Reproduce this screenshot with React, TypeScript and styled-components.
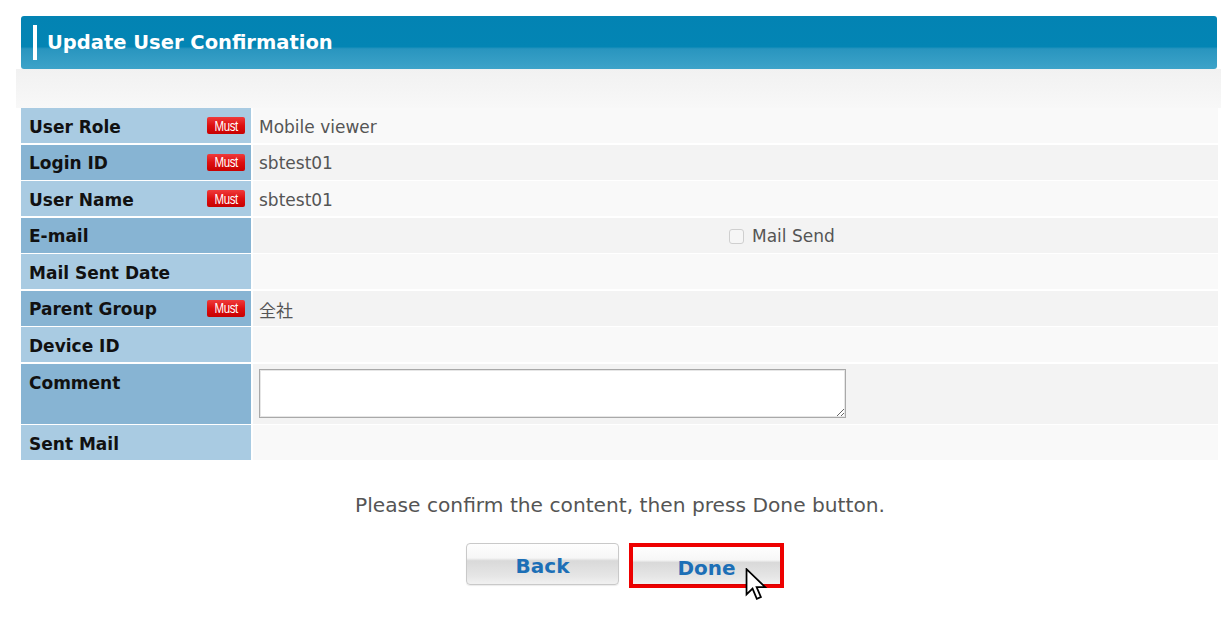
import React from "react";
import styled, { createGlobalStyle } from "styled-components";

const GlobalStyle = createGlobalStyle`
  html, body {
    margin: 0;
    padding: 0;
    background: #fff;
  }
  body {
    font-family: "DejaVu Sans", Verdana, sans-serif;
  }
`;

const Page = styled.div`
  width: 1227px;
  height: 635px;
  padding-top: 16px;
  box-sizing: border-box;
`;

const Panel = styled.div`
  margin-left: 16px;
  width: 1205px;
`;

const TitleBar = styled.div`
  margin: 0 4px 0 5px;
  height: 53px;
  border-radius: 3px;
  background: linear-gradient(
    to bottom,
    #0383b3 0%,
    #0385b4 58%,
    #2995bf 62%,
    #3da3c9 100%
  );
  display: flex;
  align-items: center;
  padding-left: 12px;
  box-shadow: 0 1px 1px rgba(0, 0, 0, 0.06);
`;

const Accent = styled.span`
  width: 4px;
  height: 35px;
  background: #fff;
  margin-right: 10px;
  margin-top: -1px;
`;

const Title = styled.h1`
  margin: 0;
  color: #fff;
  font-size: 19.5px;
  font-weight: bold;
`;

const Spacer = styled.div`
  height: 39px;
  background: linear-gradient(to bottom, #f1f1f1, #f8f8f8);
`;

const Table = styled.div`
  display: flex;
  flex-direction: column;
  gap: 1.5px;
  margin: 0 3px 0 5px;
  background: #fff;
`;

const Row = styled.div<{ $tall?: boolean }>`
  display: grid;
  grid-template-columns: 230px 1fr;
  column-gap: 2px;
  height: ${(p) => (p.$tall ? "60px" : "35px")};
`;

const Label = styled.div<{ $dark: boolean; $top?: boolean }>`
  background: ${(p) => (p.$dark ? "#87b4d3" : "#a9cbe2")};
  display: flex;
  align-items: ${(p) => (p.$top ? "flex-start" : "center")};
  justify-content: space-between;
  padding: ${(p) => (p.$top ? "9px 6px 0 8px" : "2px 6px 0 8px")};
  font-size: 17px;
  font-weight: bold;
  color: #111;
`;

const Must = styled.span`
  width: 38px;
  height: 17px;
  margin-top: -2px;
  border-radius: 2px;
  background: linear-gradient(to bottom, #ef3b3b 0%, #dd1010 50%, #c80000 100%);
  color: #fff;
  font-family: "Liberation Sans", Arial, sans-serif;
  font-size: 14px;
  font-weight: normal;
  letter-spacing: -0.5px;
  display: flex;
  align-items: center;
  justify-content: center;
  overflow: hidden;
  span {
    display: inline-block;
    transform: scaleX(0.82);
  }
`;

const Value = styled.div<{ $dark: boolean; $top?: boolean }>`
  background: ${(p) => (p.$dark ? "#f3f3f3" : "#f9f9f9")};
  display: flex;
  align-items: ${(p) => (p.$top ? "flex-start" : "center")};
  padding: ${(p) => (p.$top ? "5px 0 0 6px" : "2px 0 0 6px")};
  font-size: 17px;
  color: #555;
  font-family: "DejaVu Sans", "Noto Sans CJK JP", sans-serif;
`;

const MailSend = styled.label`
  display: flex;
  align-items: center;
  gap: 8px;
  margin-left: 470px;
  color: #555;
  font-size: 17px;
`;

const Check = styled.span`
  width: 13px;
  height: 13px;
  border: 1px solid #cfcfcf;
  border-radius: 3px;
  background: #f6f6f6;
`;

const CommentBox = styled.textarea`
  width: 587px;
  height: 49px;
  box-sizing: border-box;
  border: 1px solid #a9a9a9;
  box-shadow: inset 0 0 0 1px #e6e6e6;
  background: #fff;
  margin: 0;
  resize: both;
`;

const Message = styled.p`
  margin: 33px 0 0;
  text-align: center;
  font-size: 20.2px;
  color: #555;
  padding-left: 13px;
`;

const Buttons = styled.div`
  display: flex;
  justify-content: center;
  align-items: flex-start;
  gap: 10px;
  margin-top: 26px;
  padding-left: 23px;
`;

const Button = styled.button`
  width: 153px;
  height: 42px;
  border: 1px solid #c9c9c9;
  border-radius: 4px;
  background: linear-gradient(
    to bottom,
    #fefefe 0%,
    #f7f7f7 35%,
    #d9d9d9 42%,
    #e6e6e6 80%,
    #f1f1f1 100%
  );
  color: #1c6fb6;
  font-family: "DejaVu Sans", Verdana, sans-serif;
  font-weight: bold;
  font-size: 20px;
  padding: 0;
  padding-top: 4px;
  box-shadow: 0 1px 1px rgba(0, 0, 0, 0.08);
`;

const Highlight = styled.div`
  position: relative;
  width: 155px;
  height: 45px;
  box-sizing: border-box;
  border: 4px solid #ee0000;
  display: flex;

  ${Button} {
    width: 100%;
    height: 100%;
    border: none;
    border-radius: 0;
  }
`;

const Cursor = styled.svg`
  position: absolute;
  left: 112px;
  top: 21px;
  width: 25px;
  height: 33px;
`;

type Field = {
  label: string;
  must?: boolean;
  value?: React.ReactNode;
  tall?: boolean;
};

const fields: Field[] = [
  { label: "User Role", must: true, value: "Mobile viewer" },
  { label: "Login ID", must: true, value: "sbtest01" },
  { label: "User Name", must: true, value: "sbtest01" },
  {
    label: "E-mail",
    value: (
      <MailSend>
        <Check />
        Mail Send
      </MailSend>
    ),
  },
  { label: "Mail Sent Date" },
  { label: "Parent Group", must: true, value: "全社" },
  { label: "Device ID" },
  { label: "Comment", value: <CommentBox readOnly />, tall: true },
  { label: "Sent Mail" },
];

export default function App() {
  return (
    <Page>
      <GlobalStyle />
      <Panel>
        <TitleBar>
          <Accent />
          <Title>Update User Confirmation</Title>
        </TitleBar>
        <Spacer />
        <Table>
          {fields.map((f, i) => (
            <Row key={f.label} $tall={f.tall}>
              <Label $dark={i % 2 === 1} $top={f.tall}>
                {f.label}
                {f.must && (
                  <Must>
                    <span>Must</span>
                  </Must>
                )}
              </Label>
              <Value $dark={i % 2 === 1} $top={f.tall}>
                {f.value}
              </Value>
            </Row>
          ))}
        </Table>
      </Panel>
      <Message>Please confirm the content, then press Done button.</Message>
      <Buttons>
        <Button>Back</Button>
        <Highlight>
          <Button>Done</Button>
          <Cursor viewBox="0 0 12.5 17">
            <path
              d="M0.6 0.6 L0.6 13.6 L3.7 10.6 L5.9 15.9 L8 15 L5.8 9.9 L10.2 9.9 Z"
              fill="#fff"
              stroke="#000"
              strokeWidth="0.9"
              strokeLinejoin="miter"
            />
          </Cursor>
        </Highlight>
      </Buttons>
    </Page>
  );
}
